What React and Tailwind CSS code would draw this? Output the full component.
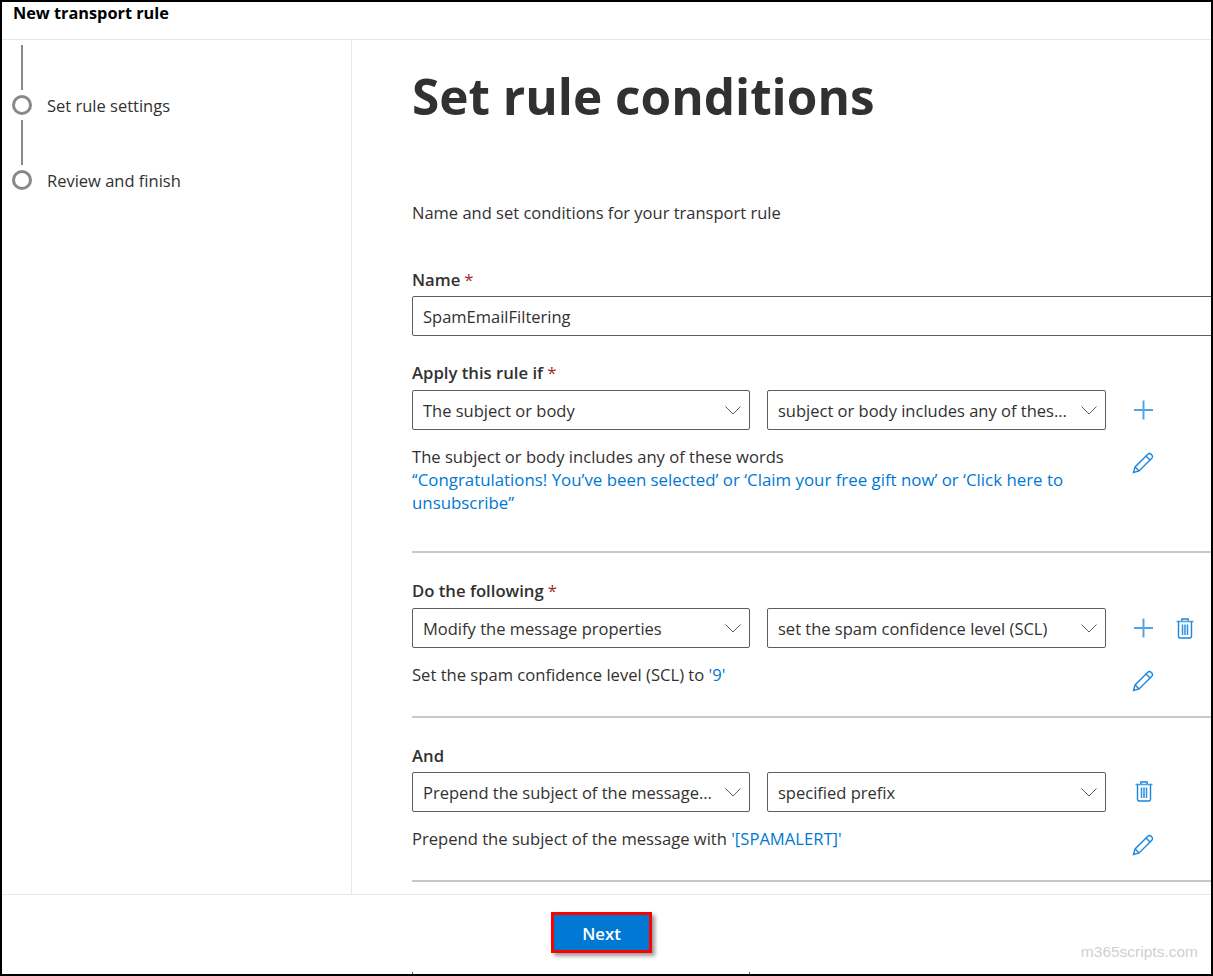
const font = { fontFamily: '"Open Sans", "Noto Sans", sans-serif' };

function Plus() {
  return (
    <svg width="22" height="22" viewBox="0 0 22 22" className="block">
      <path d="M11 1v20M1 11h20" stroke="#4fa3e8" strokeWidth="2" fill="none" />
    </svg>
  );
}

function Pencil() {
  return (
    <svg width="22" height="22" viewBox="0 0 22 22" fill="none" stroke="#1b85dc" strokeWidth="1.4" className="block">
      <path d="M1.5 20.5l1.6-5.6L15.8 2.2a2.3 2.3 0 0 1 3.3 0l.7.7a2.3 2.3 0 0 1 0 3.3L7.1 18.9z" />
      <path d="M14 4l4 4M3.1 14.9l4 4" />
    </svg>
  );
}

function Trash() {
  return (
    <svg width="18" height="21" viewBox="0 0 18 21" fill="none" className="block">
      <path d="M0.5 3.5h17" stroke="#4fa3e8" strokeWidth="1.6" />
      <path d="M5.8 3V1h6.4v2" stroke="#1b85dc" strokeWidth="1.3" />
      <path d="M2.5 3.5v15a1.5 1.5 0 0 0 1.5 1.5h10a1.5 1.5 0 0 0 1.5-1.5v-15" stroke="#1b85dc" strokeWidth="1.4" />
      <path d="M6.5 6.5v10.5M9 6.5v10.5M11.5 6.5v10.5" stroke="#2f8fe0" strokeWidth="1.5" />
    </svg>
  );
}

function Chevron() {
  return (
    <svg width="16" height="9" viewBox="0 0 16 9" fill="none" stroke="#605e5c" strokeWidth="1" className="ml-2 block shrink-0">
      <path d="M0.5 0.5L8 8l7.5-7.5" />
    </svg>
  );
}

function Select({ text, className }) {
  return (
    <div className={`flex h-10 items-center rounded-[2px] border border-[#605e5c] pr-[8px] pl-[10px] text-[16.5px] text-[#323130] ${className}`}>
      <span className="flex-1 pt-[3px] whitespace-nowrap">{text}</span>
      <Chevron />
    </div>
  );
}

function Label({ text, required }) {
  return (
    <div className="h-[22px] text-[16.7px] leading-[22px] font-semibold text-[#323130]">
      {text}
      {required && <span className="ml-1 font-normal text-[#a4262c]">*</span>}
    </div>
  );
}

function SelectRow({ left, right, plus, trash }) {
  return (
    <div className="flex items-center">
      <div className="flex w-[694px] gap-[17px]">
        <Select text={left} className="w-[338px]" />
        <Select text={right} className="w-[339px]" />
      </div>
      <div className="ml-[27px] flex h-[22px] w-[21px] justify-center">
        {plus && <Plus />}
        {trash && !plus && <Trash />}
      </div>
      <div className="ml-[21px] flex h-[21px] w-[20px] justify-center">{trash && plus && <Trash />}</div>
    </div>
  );
}

function Detail({ children, className }) {
  return (
    <div className={`flex ${className}`}>
      <div className="w-[694px] text-[16.6px] leading-[23px] text-[#323130]">{children}</div>
      <div className="ml-[26px] w-[22px] pt-[7px]">
        <Pencil />
      </div>
    </div>
  );
}

function Step({ text }) {
  return (
    <div>
      <div className="ml-[19px] h-[45px] w-[2px] bg-[#8a8886]" />
      <div className="my-[5px] flex h-5 items-center">
        <div className="ml-[10px] h-5 w-5 rounded-full border-[3px] border-[#8a8886]" />
        <div className="ml-[15px] pt-[2px] text-[16.5px] text-[#323130]">{text}</div>
      </div>
    </div>
  );
}

export default function App() {
  return (
    <div style={font} className="relative flex h-[976px] w-[1213px] flex-col overflow-hidden border-2 border-black bg-white">
      <div className="h-[38px] shrink-0 border-b border-[#e6e6e6] pl-[11px] text-[16.3px] leading-[22px] font-bold text-black">
        New transport rule
      </div>

      <div className="flex min-h-0 flex-1">
        <div className="w-[350px] shrink-0 border-r border-[#e6e6e6] pt-[5px]">
          <Step text="Set rule settings" />
          <Step text="Review and finish" />
        </div>

        <div className="min-w-0 flex-1 overflow-hidden pl-[60px]">
          <h1 className="mt-[16px] h-[80px] text-[49.5px] leading-[80px] font-bold text-[#323130]">Set rule conditions</h1>
          <p className="mt-[65px] h-[24px] text-[16.5px] leading-[24px] text-[#323130]">Name and set conditions for your transport rule</p>

          <div className="mt-[44px]">
            <Label text="Name" required />
          </div>
          <div className="mt-[5px] flex h-10 w-[830px] items-center rounded-[2px] border border-[#605e5c] pt-[3px] pl-[10px] text-[16.5px] text-[#323130]">
            SpamEmailFiltering
          </div>

          <div className="mt-[26px] mb-[6px]">
            <Label text="Apply this rule if" required />
          </div>
          <SelectRow left="The subject or body" right="subject or body includes any of thes..." plus />
          <Detail className="mt-[15px]">
            The subject or body includes any of these words
            <div className="text-[16.85px] text-[#0078d4]">
              ‘‘Congratulations! You’ve been selected’ or ‘Claim your free gift now’ or ‘Click here to unsubscribe’’
            </div>
          </Detail>

          <div className="mt-[37px] h-[2px] w-[830px] bg-[#c8c8c8]" />

          <div className="mt-[27px] mb-[6px]">
            <Label text="Do the following" required />
          </div>
          <SelectRow left="Modify the message properties" right="set the spam confidence level (SCL)" plus trash />
          <Detail className="mt-[15px] h-[53px]">
            Set the spam confidence level (SCL) to <span className="text-[#0078d4]">'9'</span>
          </Detail>

          <div className="h-[2px] w-[830px] bg-[#c8c8c8]" />

          <div className="mt-[27px] mb-[5px]">
            <Label text="And" />
          </div>
          <SelectRow left="Prepend the subject of the message..." right="specified prefix" trash />
          <Detail className="mt-[15px] h-[53px]">
            Prepend the subject of the message with <span className="text-[#0078d4]">'[SPAMALERT]'</span>
          </Detail>

          <div className="h-[2px] w-[830px] bg-[#c8c8c8]" />
        </div>
      </div>

      <div className="flex h-[80px] shrink-0 items-start border-t border-[#e6e6e6] pt-[17px] pl-[549px]">
        <button className="h-[41px] w-[101px] border-[3px] border-[#ff0000] bg-[#0078d4] pt-[2px] text-[16.8px] font-semibold text-white shadow-[3px_3px_4px_rgba(0,0,0,0.4)]">
          Next
        </button>
      </div>

      {/* next row's select borders peek out under the footer */}
      <div className="absolute bottom-0 left-[410px] h-[2px] w-[1px] bg-[#605e5c]" />
      <div className="absolute bottom-0 left-[747px] h-[2px] w-[1px] bg-[#605e5c]" />

      <div className="absolute right-[13px] bottom-[11px] text-[15.5px] text-[#cfcfcf]" style={{ fontFamily: '"Liberation Sans", sans-serif' }}>
        m365scripts.com
      </div>
    </div>
  );
}
